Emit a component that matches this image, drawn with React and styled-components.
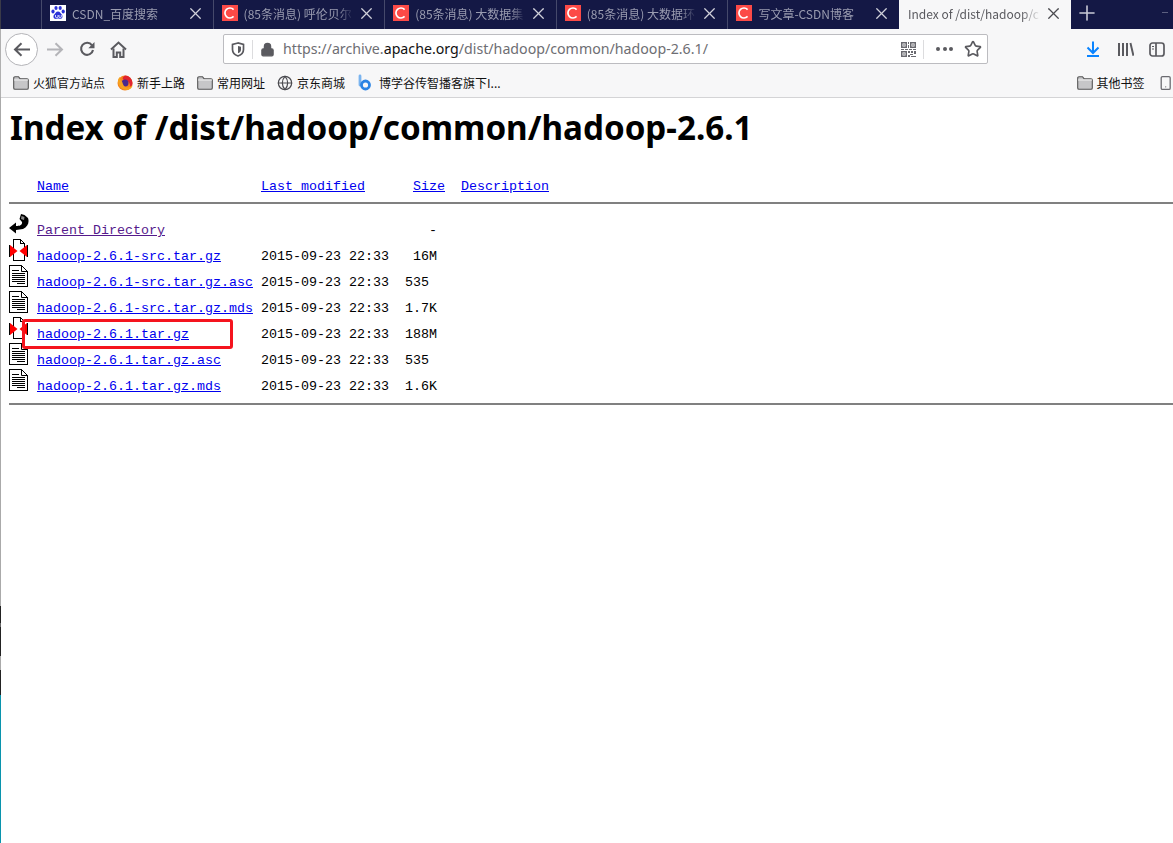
import React from 'react';
import styled, { createGlobalStyle } from 'styled-components';
import { X, Plus, Lock, Star, Globe, Smartphone } from 'lucide-react';

const Global = createGlobalStyle`
  html, body { margin: 0; padding: 0; background: #fff; }
  body { font-family: "Noto Sans CJK SC", "Noto Sans", sans-serif; overflow: hidden; }
`;

const Screen = styled.div`
  display: flex;
  width: 1173px;
  height: 843px;
  overflow: hidden;
`;

const Edge = styled.div`
  width: 1px;
  display: flex;
  flex-direction: column;
  flex: none;
`;

const EdgeBit = styled.div`
  height: ${(p) => p.$h}px;
  background: ${(p) => p.$c};
`;

const Browser = styled.div`
  flex: 1;
  min-width: 0;
  display: flex;
  flex-direction: column;
  position: relative;
`;

const TabBar = styled.div`
  height: 29px;
  background: #141845;
  display: flex;
  padding-left: 40px;
`;

const Tab = styled.div`
  width: 171.6px;
  flex: none;
  box-sizing: border-box;
  display: flex;
  align-items: center;
  padding: 0 8px 3px;
  gap: 6px;
  background: ${(p) => (p.$active ? '#f7f7f8' : 'transparent')};
  border-left: 1px solid ${(p) => (p.$active ? 'transparent' : '#45496b')};
  svg { flex: none; }
`;

const TabTitle = styled.div`
  flex: 1;
  min-width: 0;
  white-space: nowrap;
  overflow: hidden;
  font-size: 12px;
  margin-right: -3px;
  color: ${(p) => (p.$active ? '#5a5a5f' : '#9a9cb0')};
  -webkit-mask-image: linear-gradient(to right, #000 85%, transparent 100%);
  mask-image: linear-gradient(to right, #000 85%, transparent 100%);
`;

const NewTab = styled.div`
  width: 33px;
  flex: none;
  box-sizing: border-box;
  padding-bottom: 4px;
  display: flex;
  align-items: center;
  justify-content: center;
  color: #c9cad6;
`;

const Minimize = styled.div`
  width: 6px;
  height: 1px;
  background: #5c5f80;
  margin: 12px 5px 0 auto;
  align-self: flex-start;
`;

const NavBar = styled.div`
  height: 40px;
  background: #f7f7f8;
  display: flex;
  align-items: center;
  padding-left: 4px;
  color: #5a5a5f;
`;

const BackCircle = styled.div`
  width: 33px;
  height: 33px;
  box-sizing: border-box;
  border: 1px solid #b4b4b8;
  border-radius: 50%;
  background: #fff;
  display: flex;
  align-items: center;
  justify-content: center;
  flex: none;
`;

const NavButton = styled.div`
  width: ${(p) => p.$w || 32}px;
  display: flex;
  justify-content: center;
  flex: none;
  color: ${(p) => p.$c || '#5a5a5f'};
`;

const UrlBox = styled.div`
  margin-left: 89px;
  width: 765px;
  height: 30px;
  flex: none;
  box-sizing: border-box;
  background: #fff;
  border: 1px solid #bcbcc0;
  border-radius: 2px;
  display: flex;
  align-items: center;
  padding-right: 2px;
`;

const ShieldCell = styled.div`
  width: 28px;
  height: 19px;
  display: flex;
  align-items: center;
  justify-content: center;
  border-right: 1px solid #dcdcde;
  flex: none;
`;

const Url = styled.div`
  flex: 1;
  font-family: "Noto Sans", sans-serif;
  font-size: 14.2px;
  color: #6e6e73;
  white-space: nowrap;
  margin: -2px 0 0 2px;
  b { font-weight: 400; color: #111; }
`;

const UrlTools = styled.div`
  display: flex;
  align-items: center;
  height: 19px;
`;

const QrCell = styled.div`
  width: 22px;
  height: 19px;
  display: flex;
  align-items: center;
  border-right: 1px solid #dcdcde;
  margin-right: 12px;
`;

const Dots = styled.div`
  display: flex;
  gap: 2.5px;
  margin-right: 8px;
  span { width: 4px; height: 4px; border-radius: 50%; background: #5a5a5f; }
`;

const RightTools = styled.div`
  margin-left: 89px;
  display: flex;
  align-items: center;
  flex: none;
`;

const Bookmarks = styled.div`
  height: 29px;
  box-sizing: border-box;
  background: #f7f7f8;
  border-bottom: 1px solid #d4d4d6;
  display: flex;
  align-items: center;
  padding: 0 0 1px 12px;
  font-size: 12px;
  color: #111;
  white-space: nowrap;
`;

const Mark = styled.div`
  display: flex;
  align-items: center;
  gap: ${(p) => p.$iconGap ?? 4}px;
  margin-right: ${(p) => p.$gap ?? 12}px;
  margin-left: ${(p) => p.$left ?? 0}px;
`;

const Page = styled.div`
  flex: 1;
  background: #fff;
  padding: 0 0 0 8px;
  color: #000;
  position: relative;
`;

const Heading = styled.h1`
  margin: 8px 0 21px 1px;
  font-family: "Noto Sans", sans-serif;
  font-weight: 700;
  font-size: 33.2px;
  line-height: 44px;
  white-space: nowrap;
`;

const Listing = styled.div`
  font-family: "Liberation Mono", monospace;
  font-size: 13.33px;
  white-space: pre;
`;

const Row = styled.div`
  display: grid;
  grid-template-columns: 28px 224px 144px 56px auto;
  grid-template-rows: 26px;
  height: 26px;
  align-items: end;
  line-height: 15px;
`;

const Cell = styled.div`
  padding-bottom: 3px;
`;

const IconCell = styled.div`
  height: 22px;
  padding-bottom: 6px;
`;

const FileLink = styled.a`
  color: ${(p) => (p.$visited ? '#551a8b' : '#0000ee')};
  text-decoration: underline;
`;

const Rule = styled.div`
  height: 2px;
  background: #808080;
  margin: ${(p) => p.$m};
`;

const Highlight = styled.div`
  position: absolute;
  left: 21px;
  top: 221px;
  width: 211px;
  height: 30px;
  box-sizing: border-box;
  border: 3px solid #f5141e;
  border-radius: 3px;
`;

const CIcon = () => (
  <svg width="16" height="16" viewBox="0 0 16 16">
    <rect width="16" height="16" fill="#fc4a47" />
    <path d="M11.6 4.6A5 5 0 1 0 11.6 11.4" fill="none" stroke="#fff" strokeWidth="1.7" />
  </svg>
);

const PawIcon = () => (
  <svg width="16" height="16" viewBox="0 0 16 16">
    <rect width="16" height="16" fill="#fff" />
    <g fill="#2b32d8">
      <ellipse cx="3" cy="6.5" rx="1.6" ry="2" />
      <ellipse cx="6" cy="3" rx="1.6" ry="2.1" />
      <ellipse cx="10.2" cy="3" rx="1.6" ry="2.1" />
      <ellipse cx="13.2" cy="6.5" rx="1.6" ry="2" />
      <path d="M8 6.5c2 0 2.4 1.8 3.7 3 1.4 1.4 1 4.5-1.7 4.5-1 0-1.2-.4-2-.4s-1.2.4-2 .4c-2.8 0-3.1-3.1-1.7-4.5C5.6 8.3 6 6.5 8 6.5z" />
    </g>
    <path d="M5.5 10v2c0 1 2.5 1 2.5 0v-2M9 10v2c0 1 2.3 1 2.3 0v-2" fill="none" stroke="#fff" strokeWidth=".8" />
  </svg>
);

const FoxIcon = () => (
  <svg width="16" height="16" viewBox="0 0 16 16">
    <circle cx="8" cy="8" r="7.5" fill="#f5841f" />
    <path d="M8 .5A7.5 7.5 0 0 1 15.5 8c0 2-1 3.8-2.3 5.2C14 9 11 5 8 5 6 5 4 3 8 .5z" fill="#e0242f" />
    <circle cx="8" cy="8" r="3.5" fill="#4b2a8c" />
    <path d="M1 6c0 5 4 9 9 9 3 0 5.5-2.5 5.5-5-2 3-7 3-8.5 1S5.5 7 5 6.5 3 5 3 3 1 4 1 6z" fill="#f6a21e" />
  </svg>
);

const BingIcon = () => (
  <svg width="16" height="17" viewBox="0 0 16 17">
    <path d="M3 2v9" stroke="#7ab4ef" strokeWidth="2.8" strokeLinecap="round" />
    <circle cx="8.5" cy="11" r="4" fill="none" stroke="#2b84e4" strokeWidth="2.8" />
  </svg>
);

const FolderIcon = () => (
  <svg width="16" height="14" viewBox="0 0 16 14">
    <path d="M.7 12V2A1.3 1.3 0 0 1 2 .7h3.5l1.5 2h7A1.3 1.3 0 0 1 15.3 4v8a1.3 1.3 0 0 1-1.3 1.3H2A1.3 1.3 0 0 1 .7 12z" fill="#c6c6c8" stroke="#555" strokeWidth="1.1" />
    <path d="M1 4h14" stroke="#f2f2f2" strokeWidth="1" />
  </svg>
);

const QrIcon = () => (
  <svg width="15" height="15" viewBox="0 0 15 15" fill="#6a6a70">
    <path fillRule="evenodd" d="M0 0h6v6H0zM1.5 1.5v3h3v-3zM9 0h6v6H9zM10.5 1.5v3h3v-3zM0 9h6v6H0zM1.5 10.5v3h3v-3z" />
    <path d="M2.3 2.3h1.4v1.4H2.3zM11.3 2.3h1.4v1.4h-1.4zM2.3 11.3h1.4v1.4H2.3zM7 0h1v2H7zM7 3h1v3H7zM0 7h3v1H0zM4 7h3v1H4zM8 7h3v1H8zM12 7h3v1h-3zM7 9h2v2H7zM10 9h2v2h-2zM13 9h2v3h-2zM9 12h3v1H9zM7 13h2v2H7zM10 14h5v1h-5z" />
  </svg>
);

const ArrowIcon = ({ flip, color }) => (
  <svg width="18" height="15" viewBox="0 0 18 15" fill="none" stroke={color} strokeWidth="2" style={flip ? { transform: 'scaleX(-1)' } : undefined}>
    <path d="M17 7.5H2.5M8.5 1.2L2 7.5l6.5 6.3" />
  </svg>
);

const ReloadIcon = () => (
  <svg width="16" height="16" viewBox="0 0 16 16" fill="none" stroke="#5a5a5f" strokeWidth="2.1">
    <path d="M13 4.3A6 6 0 1 0 14 9" />
    <path d="M15.5 1v6.2H9.3z" fill="#5a5a5f" stroke="none" />
  </svg>
);

const HomeIcon = () => (
  <svg width="17" height="17" viewBox="0 0 17 17" fill="none" stroke="#5a5a5f" strokeWidth="2">
    <path d="M1 8.5l7.5-7 7.5 7" />
    <path d="M3.5 7.5V16h3.3v-4.5h3.4V16h3.3V7.5" />
  </svg>
);

const ShieldIcon = () => (
  <svg width="14" height="15" viewBox="0 0 14 15">
    <path d="M7 1L1.5 2.5v5c0 3 2.5 5.5 5.5 6.5 3-1 5.500-3.500 5.500-6.500v-5z" fill="none" stroke="#5a5a5f" strokeWidth="1.7" />
    <path d="M7 4l3 .8v3C10 9.5 8.5 10.7 7 11.3z" fill="#5a5a5f" />
  </svg>
);

const DownloadIcon = () => (
  <svg width="14" height="16" viewBox="0 0 14 16" fill="none" stroke="#0a84ff" strokeWidth="2">
    <path d="M7 .5V11M1.5 6.5L7 12l5.5-5.5M1 15h12" />
  </svg>
);

const LibraryIcon = () => (
  <svg width="17" height="15" viewBox="0 0 17 15" fill="#5a5a5f">
    <rect x="1" y="1" width="2" height="13" />
    <rect x="5" y="1" width="2" height="13" />
    <rect x="9" y="1" width="2" height="13" />
    <path d="M12.5 1.3l1.9-.5 3 12.7-1.9.5z" />
  </svg>
);

const SidebarIcon = () => (
  <svg width="16" height="15" viewBox="0 0 16 15" fill="none" stroke="#5a5a5f" strokeWidth="1.7">
    <rect x="1" y="1" width="14" height="13" rx="2.5" />
    <path d="M7 1v13" />
    <path d="M3 4.5h2M3 7h2" strokeWidth="1.2" />
  </svg>
);

const BackIcon = () => (
  <svg width="20" height="22" viewBox="0 0 20 22">
    <path d="M0 15l7-5.5V13c4 0 6.5-1 6-4l-2.5-3L12 1l3.5 1L19 5c1.5 4 0 9-5 11l-7 1v3.5z" fill="#000" />
    <path d="M12.5 3l3 1-.5 3-3-1z" fill="#888" />
  </svg>
);

const TextIcon = () => (
  <svg width="20" height="22" viewBox="0 0 20 22" shapeRendering="crispEdges">
    <path d="M.5.5h12l5 5 1 1v15H.5z" fill="#fff" stroke="#000" />
    <path d="M12.5.5l6 6h-6z" fill="#fff" stroke="#000" shapeRendering="auto" />
    <path d="M3 5h7v1H3zM3 8h13v1H3zM3 10h13v1H3zM3 12h13v1H3zM3 14h13v1H3zM3 16h13v1H3zM8 18h8v1H8z" fill="#000" />
  </svg>
);

const ArchiveIcon = () => (
  <svg width="20" height="22" viewBox="0 0 20 22" shapeRendering="crispEdges">
    <path d="M4.5.5h7l4 4v17h-11z" fill="#fff" stroke="#000" />
    <path d="M11.5.5v4h4" fill="none" stroke="#000" />
    <path d="M1 6l7.5 6L1 18z" fill="#f00" shapeRendering="auto" />
    <path d="M18 6l-7.5 6 7.5 6z" fill="#f00" shapeRendering="auto" />
    <path d="M0 6h1v12H0zM18 6h1v12h-1z" fill="#000" />
  </svg>
);

const FILES = [
  { name: 'hadoop-2.6.1-src.tar.gz', size: ' 16M', Icon: ArchiveIcon },
  { name: 'hadoop-2.6.1-src.tar.gz.asc', size: '535 ', Icon: TextIcon },
  { name: 'hadoop-2.6.1-src.tar.gz.mds', size: '1.7K', Icon: TextIcon },
  { name: 'hadoop-2.6.1.tar.gz', size: '188M', Icon: ArchiveIcon },
  { name: 'hadoop-2.6.1.tar.gz.asc', size: '535 ', Icon: TextIcon },
  { name: 'hadoop-2.6.1.tar.gz.mds', size: '1.6K', Icon: TextIcon },
];

const TABS = [
  { title: 'CSDN_百度搜索', icon: <PawIcon /> },
  { title: '(85条消息) 呼伦贝尔', icon: <CIcon /> },
  { title: '(85条消息) 大数据集', icon: <CIcon /> },
  { title: '(85条消息) 大数据环', icon: <CIcon /> },
  { title: '写文章-CSDN博客', icon: <CIcon /> },
];

const EDGE = [
  [29, '#3a3a48'], [68, '#b0b0b0'], [509, '#aaaaaa'], [17, '#222'], [4, '#666'], [29, '#222'], [14, '#aaa'], [25, '#222'], [148, '#0994ad'],
];

export default function App() {
  return (
    <Screen>
      <Global />
      <Edge>
        {EDGE.map(([h, c], i) => <EdgeBit key={i} $h={h} $c={c} />)}
      </Edge>
      <Browser>
        <TabBar>
          {TABS.map((t) => (
            <Tab key={t.title}>
              {t.icon}
              <TabTitle>{t.title}</TabTitle>
              <X size={19} color="#d0d1da" strokeWidth={1.6} />
            </Tab>
          ))}
          <Tab $active>
            <TabTitle $active>Index of /dist/hadoop/c</TabTitle>
            <X size={19} color="#4a4a4f" strokeWidth={1.6} />
          </Tab>
          <NewTab><Plus size={24} strokeWidth={1.6} /></NewTab>
          <Minimize />
        </TabBar>
        <NavBar>
          <BackCircle><ArrowIcon color="#5a5a5f" /></BackCircle>
          <NavButton $w={33}><ArrowIcon flip color="#b4b4b8" /></NavButton>
          <NavButton $w={32}><ReloadIcon /></NavButton>
          <NavButton $w={31}><HomeIcon /></NavButton>
          <UrlBox>
            <ShieldCell><ShieldIcon /></ShieldCell>
            <NavButton $w={28}><Lock size={15} fill="#5a5a5f" strokeWidth={2} /></NavButton>
            <Url>https://archive.<b>apache.org</b>/dist/hadoop/common/hadoop-2.6.1/</Url>
            <UrlTools>
              <QrCell><QrIcon /></QrCell>
              <Dots><span /><span /><span /></Dots>
              <NavButton $w={24}><Star size={18} strokeWidth={2.2} /></NavButton>
            </UrlTools>
          </UrlBox>
          <RightTools>
            <NavButton $w={32}><DownloadIcon /></NavButton>
            <NavButton $w={32}><LibraryIcon /></NavButton>
            <NavButton $w={32}><SidebarIcon /></NavButton>
          </RightTools>
        </NavBar>
        <Bookmarks>
          <Mark><FolderIcon />火狐官方站点</Mark>
          <Mark><FoxIcon />新手上路</Mark>
          <Mark><FolderIcon />常用网址</Mark>
          <Mark><Globe size={16} color="#4a4a4f" strokeWidth={1.8} />京东商城</Mark>
          <Mark $gap={0} $iconGap={6}><BingIcon />博学谷传智播客旗下I...</Mark>
          <Mark $left={576} $gap={13}><FolderIcon />其他书签</Mark>
          <Smartphone size={16} color="#6a6a70" strokeWidth={2} />
        </Bookmarks>
        <Page>
          <Heading>Index of /dist/hadoop/common/hadoop-2.6.1</Heading>
          <Listing>
            <Row>
              <Cell />
              <Cell><FileLink href="#">Name</FileLink></Cell>
              <Cell><FileLink href="#">Last modified</FileLink></Cell>
              <Cell> <FileLink href="#">Size</FileLink></Cell>
              <Cell><FileLink href="#">Description</FileLink></Cell>
            </Row>
            <Rule $m="5px 0 11px" />
            <Row>
              <IconCell><BackIcon /></IconCell>
              <Cell><FileLink href="#" $visited>Parent Directory</FileLink></Cell>
              <Cell />
              <Cell>   -</Cell>
            </Row>
            {FILES.map(({ name, size, Icon }) => (
              <Row key={name}>
                <IconCell><Icon /></IconCell>
                <Cell><FileLink href="#">{name}</FileLink></Cell>
                <Cell>2015-09-23 22:33</Cell>
                <Cell>{size}</Cell>
              </Row>
            ))}
            <Rule $m="6px 0 0" />
          </Listing>
          <Highlight />
        </Page>
      </Browser>
    </Screen>
  );
}
